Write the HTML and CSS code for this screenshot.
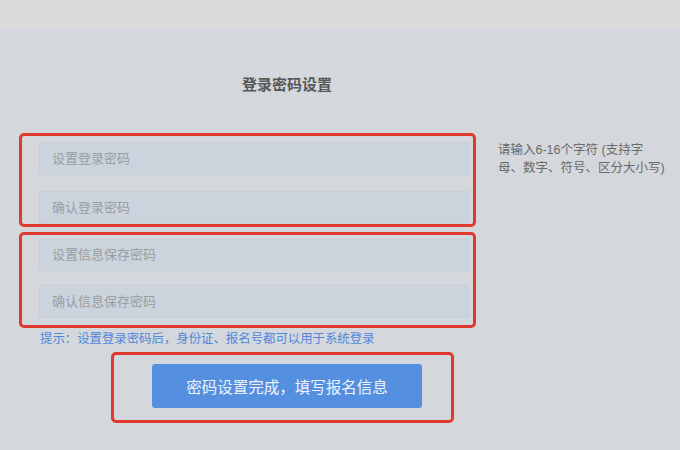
FILE: index.html
```html
<!DOCTYPE html>
<html lang="zh">
<head>
<meta charset="utf-8">
<title>登录密码设置</title>
<link rel="stylesheet" href="styles.css">
</head>
<body>
<div class="topbar"></div>
<div class="main">
  <h1 class="title">登录密码设置</h1>
  <div class="row">
    <div class="form">
      <div class="group group-login">
        <input class="field" type="password" placeholder="设置登录密码">
        <input class="field" type="password" placeholder="确认登录密码">
      </div>
      <div class="group group-info">
        <input class="field" type="password" placeholder="设置信息保存密码">
        <input class="field" type="password" placeholder="确认信息保存密码">
      </div>
      <p class="hint">提示：设置登录密码后，身份证、报名号都可以用于系统登录</p>
    </div>
    <p class="note">请输入6-16个字符 (支持字<br>母、数字、符号、区分大小写)</p>
  </div>
  <div class="btn-box">
    <button class="btn" type="button">密码设置完成，填写报名信息</button>
  </div>
</div>
</body>
</html>
```
FILE: styles.css
```css
html, body {
  margin: 0;
  padding: 0;
}
body {
  background: #d4d7db;
  font-family: "Liberation Sans", "Noto Sans CJK SC", sans-serif;
  height: 450px;
  overflow: hidden;
}
.topbar {
  height: 28px;
  background: #dbdbdb;
}
.main {
  padding-left: 19px;
}
.title {
  width: 536px;
  margin: 47px 0 0;
  text-align: center;
  font-size: 15px;
  line-height: 20px;
  font-weight: bold;
  color: #575757;
}
.row {
  display: flex;
  align-items: flex-start;
  margin-top: 38px;
}
.form {
  width: 457px;
  display: flex;
  flex-direction: column;
}
.group {
  border: 3px solid #e0392e;
  border-radius: 5px;
  display: flex;
  flex-direction: column;
  padding: 6px 4px 0 17px;
  gap: 16px;
}
.group-info {
  margin-top: 5px;
  padding: 3px 4px 7px 17px;
  gap: 14px;
}
.field {
  box-sizing: border-box;
  height: 33px;
  width: 100%;
  margin: 0;
  border: 1px solid #c7ced7;
  border-radius: 2px;
  background: #cbd3dc;
  padding: 0 12px;
  font-family: "Liberation Sans", "Noto Sans CJK SC", sans-serif;
  font-size: 13px;
  color: #555;
  outline: none;
}
.field::placeholder {
  color: #999ea4;
}
.hint {
  margin: 3px 0 0 21px;
  font-size: 12.4px;
  line-height: 16px;
  color: #4f87dd;
  white-space: nowrap;
}
.note {
  margin: 8px 0 0 22px;
  font-size: 12.5px;
  line-height: 18px;
  color: #6a6a6a;
  white-space: nowrap;
}
.btn-box {
  box-sizing: border-box;
  width: 343px;
  margin: 5px 0 0 92px;
  border: 3px solid #e0392e;
  border-radius: 5px;
  padding: 9px 29px 12px 38px;
}
.btn {
  display: block;
  width: 270px;
  height: 44px;
  border: none;
  border-radius: 3px;
  background: #5590e0;
  color: #eef3fb;
  font-family: "Liberation Sans", "Noto Sans CJK SC", sans-serif;
  font-size: 15.5px;
  cursor: pointer;
}
```
